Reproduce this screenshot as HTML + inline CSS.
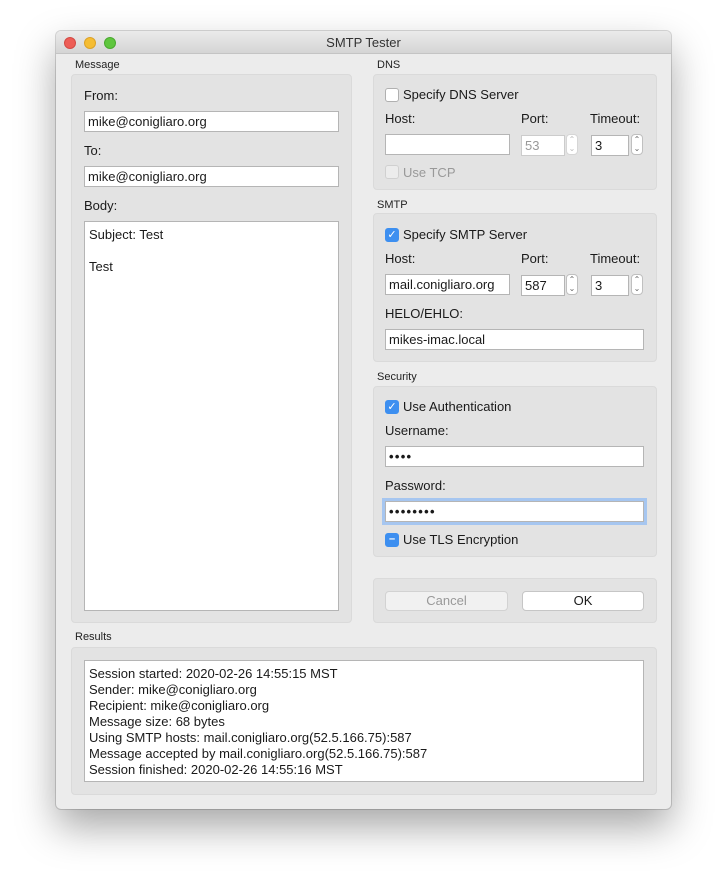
<!DOCTYPE html>
<html><head><meta charset="utf-8"><style>
*{box-sizing:border-box;margin:0;padding:0}
body{width:727px;height:889px;background:#fff;font-family:"Liberation Sans",sans-serif;font-size:13px;color:#1a1a1a;position:relative;overflow:hidden}
.win{position:absolute;left:56px;top:31px;width:615px;height:778px;background:#ececec;border-radius:5px;box-shadow:0 18px 40px rgba(0,0,0,.35),0 0 0 1px rgba(0,0,0,.15);overflow:hidden}
.tb{position:absolute;left:0;top:0;width:615px;height:23px;background:linear-gradient(#ebebeb,#d5d5d5);border-bottom:1px solid #c4c4c4;text-align:center;line-height:23px;font-size:13px;color:#333}
.dot{position:absolute;top:6px;width:12px;height:12px;border-radius:50%}
.a{position:absolute}
.sm{font-size:11px;color:#222}
.box{position:absolute;background:#e3e3e3;border:1px solid #dadada;border-radius:4px}
.in{position:absolute;background:#fff;border:1px solid #b5b5b5;height:21px;line-height:19px;padding-left:3px;font-size:13px}
.pw{font-size:13px;letter-spacing:1.3px;font-weight:bold}
.cb{position:absolute;width:14px;height:14px;border:1px solid #b0b0b0;border-radius:3px;background:#fff}
.cbon{background:#3d8ff0;border-color:#3d8ff0;color:#fff;font-size:11px;line-height:12px;text-align:center}
.st{position:absolute;width:12px;height:21px;border:1px solid #c0c0c0;border-radius:4px;background:#fff;font-size:8px;line-height:9px;text-align:center;color:#666}
.btn{position:absolute;height:20px;border:1px solid #c6c6c6;border-radius:4px;background:#fff;text-align:center;line-height:18px}
</style></head><body>
<div class="win">
<div class="tb">SMTP Tester
<div class="dot" style="left:8px;background:#ed5d56;border:1px solid #d34a44"></div>
<div class="dot" style="left:28px;background:#f5bd33;border:1px solid #dca228"></div>
<div class="dot" style="left:48px;background:#5fc63e;border:1px solid #4aa92f"></div>
</div>
</div>
<div class="a sm" style="left:75px;top:59px">Message</div>
<div class="box" style="left:71px;top:74px;width:281px;height:549px"></div>
<div class="a" style="left:84px;top:88px">From:</div>
<div class="in" style="left:84px;top:111px;width:255px">mike@conigliaro.org</div>
<div class="a" style="left:84px;top:143px">To:</div>
<div class="in" style="left:84px;top:166px;width:255px">mike@conigliaro.org</div>
<div class="a" style="left:84px;top:198px">Body:</div>
<div class="in" style="left:84px;top:221px;width:255px;height:390px;padding:5px 4px;line-height:16px">Subject: Test<br><br>Test</div>

<div class="a sm" style="left:377px;top:59px">DNS</div>
<div class="box" style="left:373px;top:74px;width:284px;height:116px"></div>
<div class="cb" style="left:385px;top:88px"></div>
<div class="a" style="left:403px;top:87px">Specify DNS Server</div>
<div class="a" style="left:385px;top:111px">Host:</div>
<div class="a" style="left:521px;top:111px">Port:</div>
<div class="a" style="left:590px;top:111px">Timeout:</div>
<div class="in" style="left:385px;top:134px;width:125px"></div>
<div class="in" style="left:521px;top:135px;width:44px;color:#999;border-color:#ccc">53</div>
<div class="st" style="left:566px;top:134px;border-color:#d6d6d6;color:#bbb">⌃<br>⌄</div>
<div class="in" style="left:591px;top:135px;width:38px">3</div>
<div class="st" style="left:631px;top:134px">⌃<br>⌄</div>
<div class="cb" style="left:385px;top:165px;background:#ececec;border-color:#d0d0d0"></div>
<div class="a" style="left:403px;top:165px;color:#999">Use TCP</div>

<div class="a sm" style="left:377px;top:199px">SMTP</div>
<div class="box" style="left:373px;top:213px;width:284px;height:149px"></div>
<div class="cb cbon" style="left:385px;top:228px">✓</div>
<div class="a" style="left:403px;top:227px">Specify SMTP Server</div>
<div class="a" style="left:385px;top:251px">Host:</div>
<div class="a" style="left:521px;top:251px">Port:</div>
<div class="a" style="left:590px;top:251px">Timeout:</div>
<div class="in" style="left:385px;top:274px;width:125px">mail.conigliaro.org</div>
<div class="in" style="left:521px;top:275px;width:44px">587</div>
<div class="st" style="left:566px;top:274px">⌃<br>⌄</div>
<div class="in" style="left:591px;top:275px;width:38px">3</div>
<div class="st" style="left:631px;top:274px">⌃<br>⌄</div>
<div class="a" style="left:385px;top:306px">HELO/EHLO:</div>
<div class="in" style="left:385px;top:329px;width:259px">mikes-imac.local</div>

<div class="a sm" style="left:377px;top:371px">Security</div>
<div class="box" style="left:373px;top:386px;width:284px;height:171px"></div>
<div class="cb cbon" style="left:385px;top:400px">✓</div>
<div class="a" style="left:403px;top:399px">Use Authentication</div>
<div class="a" style="left:385px;top:423px">Username:</div>
<div class="in pw" style="left:385px;top:446px;width:259px">••••</div>
<div class="a" style="left:385px;top:478px">Password:</div>
<div class="in pw" style="left:385px;top:501px;width:259px;box-shadow:0 0 0 3px #a6c6f0">••••••••</div>
<div class="cb cbon" style="left:385px;top:533px;line-height:10px;font-weight:bold">–</div>
<div class="a" style="left:403px;top:532px">Use TLS Encryption</div>

<div class="box" style="left:373px;top:578px;width:284px;height:45px"></div>
<div class="btn" style="left:385px;top:591px;width:123px;color:#999;background:#f1f1f1;border-color:#d2d2d2">Cancel</div>
<div class="btn" style="left:522px;top:591px;width:122px">OK</div>

<div class="a sm" style="left:75px;top:631px">Results</div>
<div class="box" style="left:71px;top:647px;width:586px;height:148px"></div>
<div class="in" style="left:84px;top:660px;width:560px;height:122px;padding:5px 4px;line-height:16px">Session started: 2020-02-26 14:55:15 MST<br>Sender: mike@conigliaro.org<br>Recipient: mike@conigliaro.org<br>Message size: 68 bytes<br>Using SMTP hosts: mail.conigliaro.org(52.5.166.75):587<br>Message accepted by mail.conigliaro.org(52.5.166.75):587<br>Session finished: 2020-02-26 14:55:16 MST</div>
</body></html>
